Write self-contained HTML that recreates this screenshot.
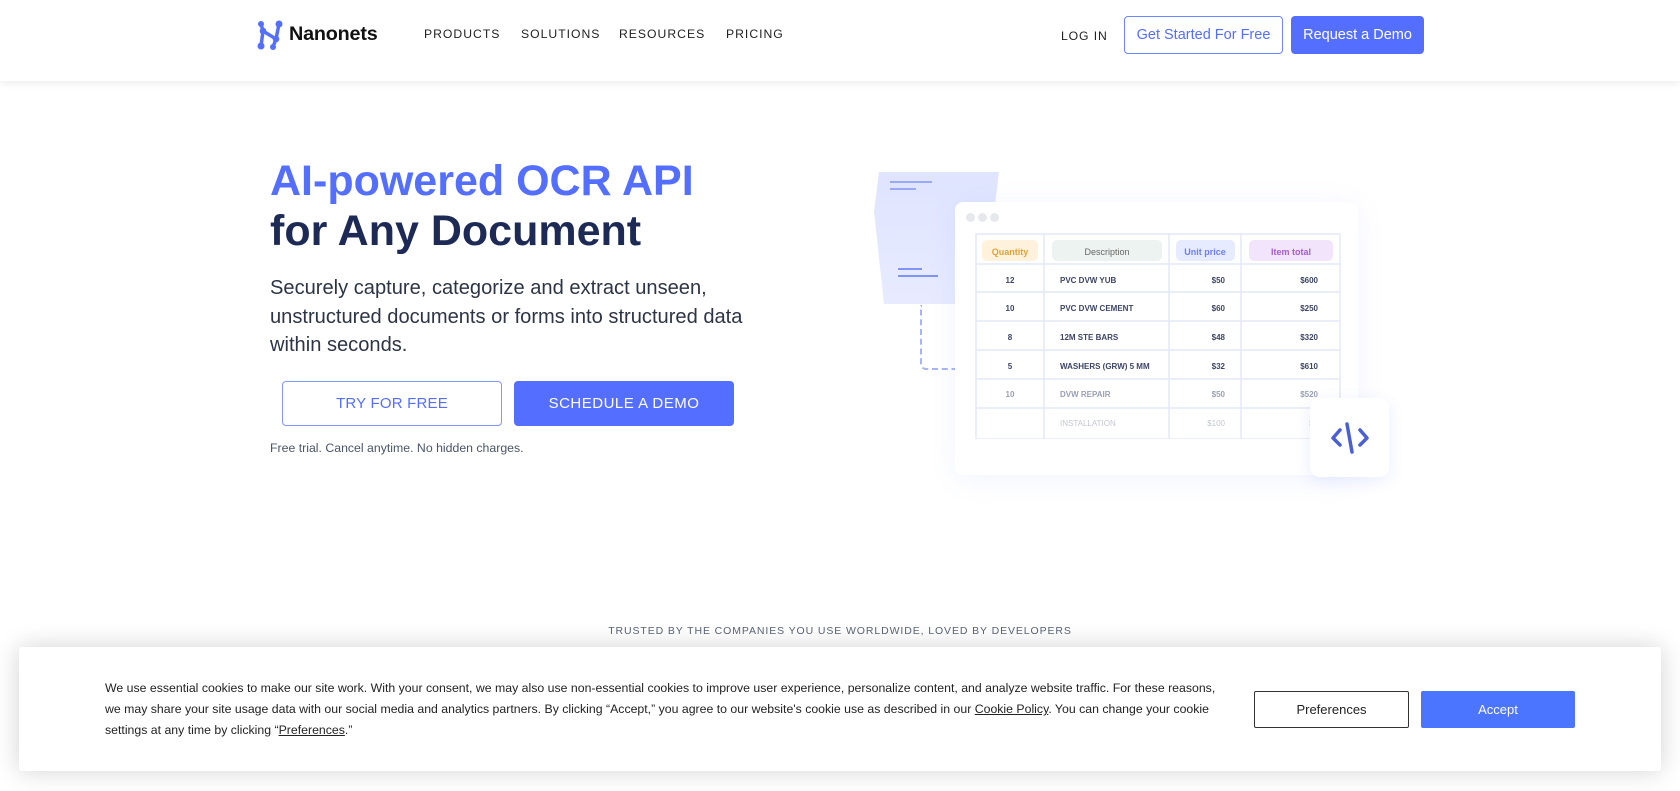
<!DOCTYPE html>
<html><head><meta charset="utf-8">
<style>
*{margin:0;padding:0;box-sizing:border-box}
body{width:1680px;height:791px;overflow:hidden;background:#fff;font-family:"Liberation Sans",Arial,sans-serif;position:relative}
.nav{position:absolute;left:0;top:0;width:1680px;height:81px;background:#fff;box-shadow:0 2px 8px rgba(0,0,0,.08)}
.abs{position:absolute}
.navl{font-size:12.2px;letter-spacing:1px;color:#222;top:27px}
.btn{position:absolute;display:flex;align-items:center;justify-content:center;border-radius:4px}
</style></head><body>
<div class="nav">
 <svg class="abs" style="left:256px;top:20px" width="30" height="30" viewBox="0 0 30 30">
  <g stroke="#546fff" stroke-width="3.5" fill="none" stroke-linecap="round"><path d="M5 26 L7 11 L20 19 L23 4"/><path d="M7 11 L5 4"/><path d="M20 19 L17 27"/></g>
  <g fill="#546fff"><circle cx="5" cy="26" r="3.5"/><circle cx="7" cy="11" r="3.3"/><circle cx="20" cy="19" r="3.3"/><circle cx="23" cy="4" r="3.5"/><circle cx="5" cy="4" r="3"/><circle cx="17" cy="27" r="3"/></g>
 </svg>
 <div class="abs" style="left:289px;top:23px;font-size:19.8px;font-weight:bold;color:#111;letter-spacing:-.2px">Nanonets</div>
 <div class="abs navl" style="left:424px">PRODUCTS</div>
 <div class="abs navl" style="left:521px">SOLUTIONS</div>
 <div class="abs navl" style="left:619px">RESOURCES</div>
 <div class="abs navl" style="left:726px">PRICING</div>
 <div class="abs navl" style="left:1061px;top:29px;letter-spacing:.9px">LOG IN</div>
 <div class="btn" style="left:1124px;top:16px;width:159px;height:38px;border:1px solid #6e85ff;color:#546fff;font-size:14.5px">Get Started For Free</div>
 <div class="btn" style="left:1291px;top:16px;width:133px;height:38px;background:#546fff;color:#fff;font-size:14.5px">Request a Demo</div>
</div>

<div class="abs" style="left:270px;top:155px;font-size:43px;font-weight:bold;color:#546fff;line-height:52px">AI-powered OCR API</div>
<div class="abs" style="left:270px;top:205px;font-size:43px;font-weight:bold;color:#1c2a55;line-height:52px">for Any Document</div>
<div class="abs" style="left:270px;top:274px;font-size:20.1px;color:#2c3445;line-height:28.5px;width:500px">Securely capture, categorize and extract unseen, unstructured documents or forms into structured data within seconds.</div>
<div class="btn" style="left:282px;top:381px;width:220px;height:45px;border:1px solid #8496ff;color:#546fff;font-size:15px;letter-spacing:.2px">TRY FOR FREE</div>
<div class="btn" style="left:514px;top:381px;width:220px;height:45px;background:#546fff;color:#fff;font-size:15px;letter-spacing:.5px">SCHEDULE A DEMO</div>
<div class="abs" style="left:270px;top:441px;font-size:12.3px;color:#4a5568">Free trial. Cancel anytime. No hidden charges.</div>

<!-- illustration -->
<div class="abs" style="left:874px;top:172px;width:125px;height:132px;background:linear-gradient(#dfe4ff,#e8ebff);clip-path:polygon(4% 0,100% 0,92% 60%,100% 100%,8% 100%,0 30%)"></div>
<div class="abs" style="left:890px;top:181px;width:42px;height:2px;background:#9aa9f5"></div>
<div class="abs" style="left:890px;top:188px;width:26px;height:2px;background:#9aa9f5"></div>
<div class="abs" style="left:898px;top:268px;width:24px;height:2px;background:#8094f5"></div>
<div class="abs" style="left:898px;top:275px;width:40px;height:2px;background:#8094f5"></div>
<div class="abs" style="left:920px;top:305px;width:36px;height:65px;border-left:2px dashed #a8b5f5;border-bottom:2px dashed #a8b5f5;border-bottom-left-radius:6px"></div>
<div class="abs" style="left:955px;top:202px;width:403px;height:273px;background:#fff;border-radius:8px;box-shadow:0 4px 30px rgba(84,111,255,.08)"></div>
<div class="abs" style="left:966px;top:213px;width:9px;height:9px;border-radius:50%;background:#e6e8ee;box-shadow:12px 0 #e6e8ee,24px 0 #e6e8ee"></div>
<svg class="abs" style="left:972px;top:233px" width="370" height="206" viewBox="0 0 370 206" font-family="Liberation Sans,sans-serif" font-weight="bold">
 <g stroke="#e4e8fa" stroke-width="1.5" fill="none">
  <rect x="4" y="1" width="364" height="205"/>
  <path d="M4 31H368M4 59H368M4 88H368M4 117H368M4 146H368M4 175H368M72 1V206M197 1V206M269 1V206"/>
 </g>
 <rect x="10" y="7" width="56" height="21" rx="5" fill="#fff2dc"/><text x="38" y="22" font-size="9" fill="#e0a23a" text-anchor="middle">Quantity</text>
 <rect x="80" y="7" width="110" height="21" rx="5" fill="#edf3f0"/><text x="135" y="22" font-size="9" fill="#666" text-anchor="middle" font-weight="normal">Description</text>
 <rect x="204" y="7" width="59" height="21" rx="5" fill="#e6ebff"/><text x="233" y="22" font-size="9" fill="#6b7ff5" text-anchor="middle">Unit price</text>
 <rect x="277" y="7" width="84" height="21" rx="5" fill="#f1e4fb"/><text x="319" y="22" font-size="9" fill="#a45cc9" text-anchor="middle">Item total</text>
 <g font-size="8" fill="#3d4566">
  <text x="38" y="50" text-anchor="middle">12</text><text x="88" y="50">PVC DVW YUB</text><text x="253" y="50" text-anchor="end">$50</text><text x="346" y="50" text-anchor="end">$600</text>
  <text x="38" y="78" text-anchor="middle">10</text><text x="88" y="78">PVC DVW CEMENT</text><text x="253" y="78" text-anchor="end">$60</text><text x="346" y="78" text-anchor="end">$250</text>
  <text x="38" y="107" text-anchor="middle">8</text><text x="88" y="107">12M STE BARS</text><text x="253" y="107" text-anchor="end">$48</text><text x="346" y="107" text-anchor="end">$320</text>
  <text x="38" y="136" text-anchor="middle">5</text><text x="88" y="136">WASHERS (GRW) 5 MM</text><text x="253" y="136" text-anchor="end">$32</text><text x="346" y="136" text-anchor="end">$610</text>
 </g>
 <g font-size="8" fill="#9aa0b5"><text x="38" y="164" text-anchor="middle">10</text><text x="88" y="164">DVW REPAIR</text><text x="253" y="164" text-anchor="end">$50</text><text x="346" y="164" text-anchor="end">$520</text></g>
 <g font-size="8" fill="#c3c7d4" font-weight="normal"><text x="88" y="193">INSTALLATION</text><text x="253" y="193" text-anchor="end">$100</text><text x="346" y="193" text-anchor="end">$1</text></g>
</svg>
<div class="abs" style="left:1310px;top:398px;width:79px;height:79px;background:#fff;border-radius:10px;box-shadow:0 4px 16px rgba(84,111,255,.12)"></div>
<svg class="abs" style="left:1330px;top:420px" width="40" height="36" viewBox="0 0 40 36"><g stroke="#4a5fd6" stroke-width="3.5" fill="none" stroke-linecap="round" stroke-linejoin="round"><path d="M10 10 L3 18 L10 25"/><path d="M30 10 L37 18 L30 25"/><path d="M17 4 L22 32"/></g></svg>

<div class="abs" style="left:0;width:1680px;top:625px;text-align:center;font-size:10.5px;letter-spacing:.9px;color:#5a6478">TRUSTED BY THE COMPANIES YOU USE WORLDWIDE, LOVED BY DEVELOPERS</div>

<div class="abs" style="left:19px;top:647px;width:1642px;height:124px;background:#fff;border-radius:3px;box-shadow:0 0 25px rgba(0,0,0,.18)"></div>
<div class="abs" style="left:105px;top:678px;width:1120px;font-size:12.3px;line-height:21px;color:#222">We use essential cookies to make our site work. With your consent, we may also use non-essential cookies to improve user experience, personalize content, and analyze website traffic. For these reasons, we may share your site usage data with our social media and analytics partners. By clicking “Accept,” you agree to our website's cookie use as described in our <u>Cookie Policy</u>. You can change your cookie settings at any time by clicking “<u>Preferences</u>.”</div>
<div class="btn" style="left:1254px;top:691px;width:155px;height:37px;border:1px solid #333;color:#222;font-size:13px;border-radius:2px">Preferences</div>
<div class="btn" style="left:1421px;top:691px;width:154px;height:37px;background:#4b74ff;color:#fff;font-size:13px;border-radius:2px">Accept</div>
</body></html>
